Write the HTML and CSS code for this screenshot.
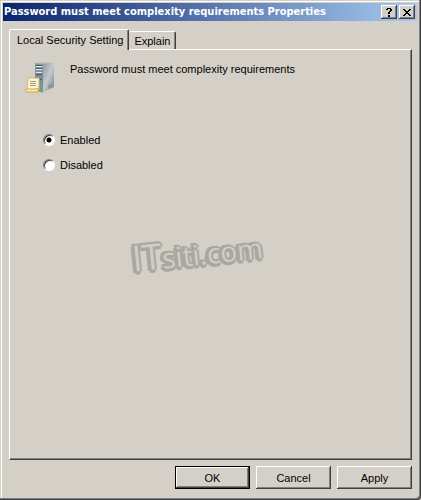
FILE: index.html
```html
<!DOCTYPE html>
<html lang="en">
<head>
<meta charset="utf-8">
<title>Password must meet complexity requirements Properties</title>
<link rel="stylesheet" href="styles.css">
</head>
<body>
<main class="window">
  <header class="titlebar">
    <h1 class="title">Password must meet complexity requirements Properties</h1>
    <button class="caption" type="button" aria-label="Help">
      <svg width="6" height="9" viewBox="0 0 6 9" shape-rendering="crispEdges"><path d="M1 0h4v1h1v2h-1v1h-1v2h-2v-2h1v-1h1v-2h-2v1h-2v-1h1zM2 7h2v2h-2z"/></svg>
    </button>
    <button class="caption" type="button" aria-label="Close">
      <svg width="8" height="7" viewBox="0 0 8 7" shape-rendering="crispEdges"><path d="M0 0h2v1h1v1h2v-1h1v-1h2v1h-1v1h-1v1h-1v1h1v1h1v1h1v1h-2v-1h-1v-1h-2v1h-1v1h-2v-1h1v-1h1v-1h1v-1h-1v-1h-1v-1h-1z"/></svg>
    </button>
  </header>
  <div class="content">
    <div class="tabs" role="tablist">
      <button class="tab tab-active" type="button" role="tab" aria-selected="true">Local Security Setting</button>
      <button class="tab" type="button" role="tab" aria-selected="false">Explain</button>
    </div>
    <section class="panel">
      <div class="policy">
        <svg class="server" width="32" height="34" viewBox="0 0 32 34">
          <defs>
            <linearGradient id="side" x1="0" y1="0" x2="1" y2="1"><stop offset="0" stop-color="#8d9598"/><stop offset=".5" stop-color="#c3cacc"/><stop offset="1" stop-color="#717c81"/></linearGradient>
            <linearGradient id="front" x1="0" y1="0" x2="0" y2="1"><stop offset="0" stop-color="#8b9da7"/><stop offset=".5" stop-color="#7c8b94"/><stop offset="1" stop-color="#87978f"/></linearGradient>
          </defs>
          <path d="M11 2l10-1 9 1-9 2z" fill="#b4bcbd"/>
          <path d="M18 3l12-1v24l-12 6z" fill="url(#side)"/>
          <path d="M11 2l8 1v29l-8-3z" fill="url(#front)"/>
          <path d="M12 5.500h6M12 8.500h6M12 11.500h6" stroke="#e0e8ec"/>
          <path d="M12 4.500h6M12 7.500h6M12 13.500h6M16 18.500h2" stroke="#4a5a65"/>
          <path d="M24 25l4-2M24 27l4-2" stroke="#7d888d"/>
          <path d="M15 28l3 1v2l-3-1z" fill="#62b52c"/>
          <path d="M4 17h11v12H3z" fill="#fff5d3" stroke="#d2b875"/>
          <path d="M6 20.500h6M6 22.500h6M6 24.500h6" stroke="#a09983"/>
          <path d="M2 28h10l2-1v4H2q-2-1 0-3z" fill="#ffe9a7" stroke="#c9a755"/>
        </svg>
        <p class="policy-name">Password must meet complexity requirements</p>
      </div>
      <div class="choices">
        <label class="choice"><input class="radio" type="radio" name="state" checked>Enabled</label>
        <label class="choice"><input class="radio" type="radio" name="state">Disabled</label>
      </div>
      <div class="watermark"><span class="brand"><span class="brand-lead">IT</span>siti.com</span></div>
    </section>
    <footer class="actions">
      <button class="button button-default" type="button">OK</button>
      <button class="button" type="button">Cancel</button>
      <button class="button" type="button">Apply</button>
    </footer>
  </div>
</main>
</body>
</html>
```
FILE: styles.css
```css
* { box-sizing: border-box; }

body {
  margin: 0;
  background: #d4d0c8;
  color: #000;
  font: 11px/16px "Liberation Sans", Arial, sans-serif;
}

button {
  padding: 0;
  border: 0;
  background: #d4d0c8;
  color: inherit;
  font: inherit;
}

h1, p { margin: 0; font: inherit; }

.window {
  display: flex;
  flex-direction: column;
  min-height: 100vh;
  padding: 3px 4px 2px 3px;
  background: #d4d0c8;
  border-radius: 0 0 4px 0;
  box-shadow: inset -1px -1px #404040, inset -2px -2px #808080, inset 1px 1px #d4d0c8, inset 2px 2px #fff;
}

.titlebar {
  display: flex;
  align-items: center;
  gap: 2px;
  height: 18px;
  padding: 0 2px 0 1px;
  background: linear-gradient(90deg, #0a246a, #a6caf0);
}

.title {
  flex: 1;
  color: #fff;
  font: bold 11px/18px "DejaVu Sans Condensed", Tahoma, sans-serif;
  white-space: nowrap;
}

.caption {
  display: flex;
  align-items: center;
  justify-content: center;
  width: 16px;
  height: 14px;
  box-shadow: inset -1px -1px #404040, inset 1px 1px #fff, inset -2px -2px #808080;
}

.content {
  display: flex;
  flex: 1;
  flex-direction: column;
  padding: 8px 5px 9px 6px;
}

.tabs {
  display: flex;
  align-items: flex-end;
}

.tab {
  height: 18px;
  padding: 0 5px;
  border: solid;
  border-width: 1px 1px 0 0;
  border-color: #fff #404040 #fff #fff;
  border-radius: 2px 2px 0 0;
  box-shadow: inset -1px 0 #808080;
  white-space: nowrap;
}

.tab-active {
  position: relative;
  height: 21px;
  margin-bottom: -1px;
  padding: 0 5px 1px 7px;
  border-left-width: 1px;
}

.panel {
  flex: 1;
  padding: 11px;
  border: 1px solid;
  border-color: #fff #404040 #404040 #fff;
  box-shadow: inset -1px -1px #808080;
}

.policy {
  display: flex;
  gap: 14px;
  padding-left: 3px;
}

.choices {
  display: grid;
  gap: 9px;
  padding: 37px 0 0 22px;
}

.choice {
  display: flex;
  align-items: center;
  gap: 5px;
}

.radio {
  width: 12px;
  height: 12px;
  margin: 0;
  appearance: none;
  border: 1px solid;
  border-color: #808080 #fff #fff #808080;
  border-radius: 50%;
  background: #fff;
  box-shadow: inset 1px 1px #404040;
}

.radio:checked { background: radial-gradient(circle, #000 2px, #fff 3px); }

.watermark {
  display: flex;
  justify-content: center;
  padding: 59px 26px 0 0;
}

.brand {
  color: #d0cdc5;
  font: 28px/40px "Open Sans", sans-serif;
  text-shadow: -2px 0 #aaa7a1, -3px 1px #aaa7a1, -4px 1px #aaa7a1, -3px -2px #aaa7a1, -2px -2px #aaa7a1, -2px 3px #aaa7a1, 0 3px #aaa7a1, 0 2px #aaa7a1, 0 -2px #aaa7a1, 2px 0 #aaa7a1, 1px 1px #aaa7a1, 1px -1px #aaa7a1;
  transform: rotate(-6deg);
}

.brand-lead { font-size: 36px; }

.actions {
  display: flex;
  justify-content: flex-end;
  gap: 6px;
  padding-top: 6px;
}

.button {
  width: 75px;
  height: 23px;
  box-shadow: inset -1px -1px #404040, inset 1px 1px #fff, inset -2px -2px #808080;
}

.button-default {
  border: 1px solid #000;
}
```
